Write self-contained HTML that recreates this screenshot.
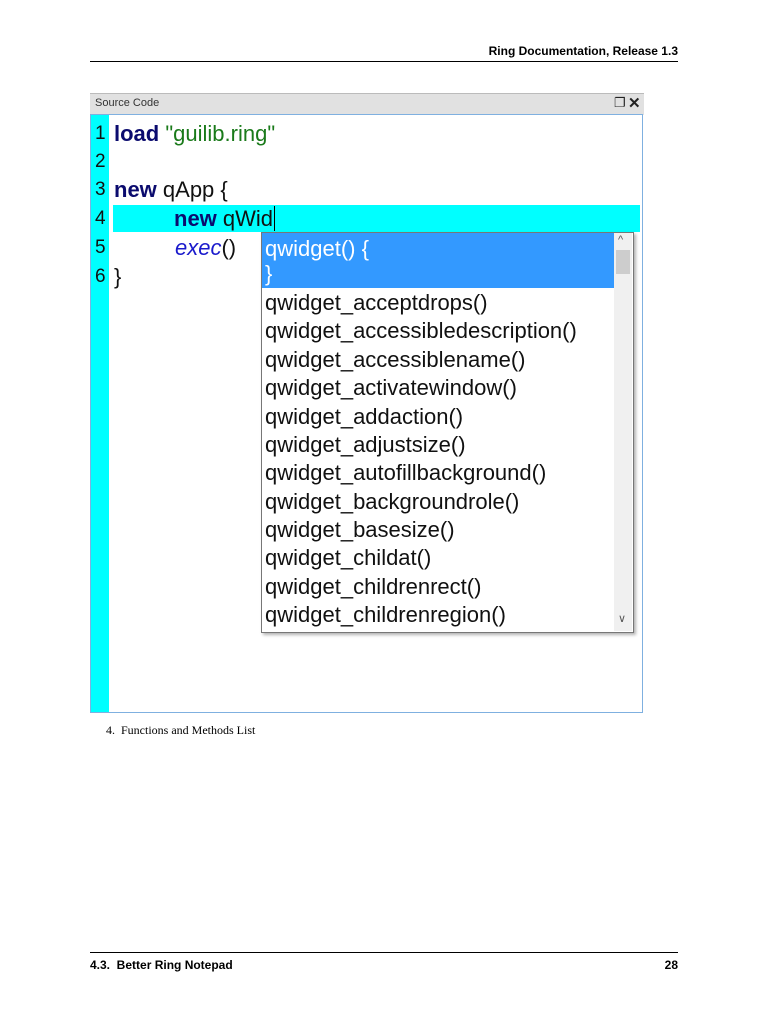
<!DOCTYPE html>
<html><head><meta charset="utf-8"><style>
body{margin:0;width:768px;height:1024px;background:#fff;position:relative;overflow:hidden;font-family:"Liberation Sans",sans-serif}
.a{position:absolute;white-space:nowrap}
.c{font-size:22px;line-height:28px;color:#111}
.n{font-size:19px;line-height:28px;color:#111}
</style></head><body>
<div class="a" style="right:90px;top:44px;font-size:12px;font-weight:bold">Ring Documentation, Release 1.3</div>
<div class="a" style="left:90px;top:61px;width:588px;height:1px;background:#000"></div>

<div class="a" style="left:90px;top:93px;width:554px;height:21px;background:#e1e1e1;border-top:1px solid #bbb"></div>
<div class="a" style="left:95px;top:97px;font-size:11px;color:#333">Source Code</div>
<div class="a" style="left:614px;top:95px;font-size:13px;color:#222">&#x2750;</div>
<div class="a" style="left:628px;top:94px;font-size:15px;font-weight:bold;color:#222">✕</div>

<div class="a" style="left:90px;top:114px;width:551px;height:597px;border:1px solid #7fb0e0;background:#fff"></div>
<div class="a" style="left:91px;top:115px;width:18px;height:597px;background:#00ffff"></div>
<div class="a" style="left:113px;top:205px;width:527px;height:27px;background:#00ffff"></div>

<div class="a n" style="left:95px;top:120px">1</div>
<div class="a n" style="left:95px;top:148px">2</div>
<div class="a n" style="left:95px;top:176px">3</div>
<div class="a n" style="left:95px;top:205px">4</div>
<div class="a n" style="left:95px;top:234px">5</div>
<div class="a n" style="left:95px;top:263px">6</div>

<div class="a c" style="left:114px;top:120px"><b style="color:#0b0b6e">load</b> <span style="color:#1a7a1a">"guilib.ring"</span></div>
<div class="a c" style="left:114px;top:176px"><b style="color:#0b0b6e">new</b> qApp {</div>
<div class="a c" style="left:174px;top:205px"><b style="color:#0b0b6e">new</b> qWid<span style="border-left:1px solid #000;margin-left:1px"></span></div>
<div class="a c" style="left:175px;top:234px"><i style="color:#1a1acc">exec</i>()</div>
<div class="a c" style="left:114px;top:263px">}</div>

<div class="a" style="left:261px;top:232px;width:371px;height:399px;border:1px solid #777;background:#fff;box-shadow:2px 2px 3px rgba(0,0,0,.3)"></div>
<div class="a" style="left:262px;top:233px;width:352px;height:55px;background:#3399ff"></div>
<div class="a" style="left:614px;top:233px;width:18px;height:398px;background:#f0f0f0"></div>
<div class="a" style="left:616px;top:250px;width:14px;height:24px;background:#cdcdcd"></div>
<div class="a" style="left:618px;top:234px;font-size:11px;color:#555">^</div>
<div class="a" style="left:618px;top:612px;font-size:11px;color:#555">&#x2228;</div>

<div class="a c" style="left:265px;top:235px;color:#fff">qwidget() {</div>
<div class="a c" style="left:265px;top:260px;color:#fff">}</div>
<div class="a c" style="left:265px;top:289px">qwidget_acceptdrops()</div>
<div class="a c" style="left:265px;top:317px">qwidget_accessibledescription()</div>
<div class="a c" style="left:265px;top:346px">qwidget_accessiblename()</div>
<div class="a c" style="left:265px;top:374px">qwidget_activatewindow()</div>
<div class="a c" style="left:265px;top:403px">qwidget_addaction()</div>
<div class="a c" style="left:265px;top:431px">qwidget_adjustsize()</div>
<div class="a c" style="left:265px;top:459px">qwidget_autofillbackground()</div>
<div class="a c" style="left:265px;top:488px">qwidget_backgroundrole()</div>
<div class="a c" style="left:265px;top:516px">qwidget_basesize()</div>
<div class="a c" style="left:265px;top:544px">qwidget_childat()</div>
<div class="a c" style="left:265px;top:573px">qwidget_childrenrect()</div>
<div class="a c" style="left:265px;top:601px">qwidget_childrenregion()</div>

<div class="a" style="left:106px;top:723px;font-family:'Liberation Serif',serif;font-size:12px">4.&nbsp; Functions and Methods List</div>

<div class="a" style="left:90px;top:952px;width:588px;height:1px;background:#000"></div>
<div class="a" style="left:90px;top:958px;font-size:12px;font-weight:bold">4.3.&nbsp; Better Ring Notepad</div>
<div class="a" style="right:90px;top:958px;font-size:12px;font-weight:bold">28</div>
</body></html>
